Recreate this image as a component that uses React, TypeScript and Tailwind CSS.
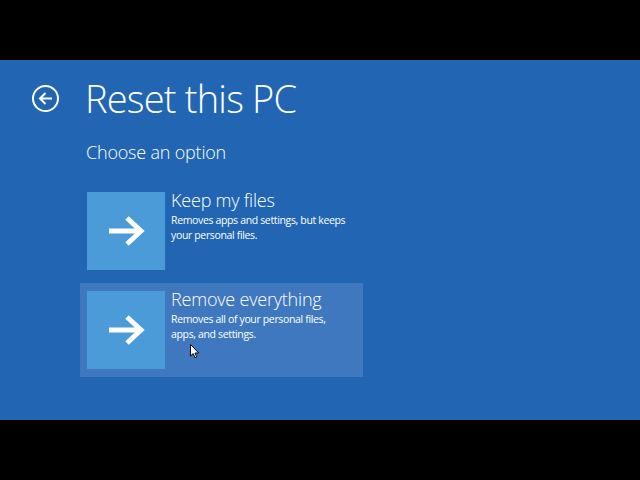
import React from "react";

function ArrowTile() {
  return (
    <div className="flex h-[78px] w-[78px] shrink-0 items-center justify-center bg-[#4b9bd9]">
      <svg width="40" height="32" viewBox="0 0 40 32" fill="none">
        <path d="M3 16H35M21 3L35 16L21 29" stroke="white" strokeWidth="5" strokeLinejoin="miter" />
      </svg>
    </div>
  );
}

type OptionProps = {
  title: string;
  lines: string[];
  active?: boolean;
  children?: React.ReactNode;
};

function Option({ title, lines, active, children }: OptionProps) {
  return (
    <div
      className={`relative flex w-[283px] gap-[6px] px-[7px] py-[8px] ${active ? "bg-[#3f78be]" : ""}`}
    >
      <ArrowTile />
      <div className="-mt-[4px] flex flex-col whitespace-nowrap">
        <div className="text-[18px] font-light leading-[24px] tracking-[-0.2px] text-white">{title}</div>
        <div className="mt-[1px] text-[10.5px] leading-[15px] tracking-[-0.35px] text-white">
          {lines.map((l) => (
            <div key={l}>{l}</div>
          ))}
        </div>
      </div>
      {children}
    </div>
  );
}

function Cursor() {
  return (
    <svg className="absolute left-[110px] top-[61px]" width="10" height="15" viewBox="0 0 10 15">
      <path d="M0.5 0.5V12L3.2 9.6L5 13.8L6.8 13L5 9H8.8Z" fill="white" stroke="black" strokeWidth="1" strokeLinejoin="round" />
    </svg>
  );
}

export default function App() {
  return (
    <div
      className="h-[480px] w-[640px] overflow-hidden bg-black pt-[60px]"
      style={{ fontFamily: '"Open Sans", "Noto Sans", sans-serif' }}
    >
      <div className="h-[360px] w-full bg-[#2266b3]">
        <div className="flex items-center pt-[14px]">
          <div className="ml-[32px] flex h-[27px] w-[27px] items-center justify-center rounded-full border-2 border-white">
            <svg width="15" height="13" viewBox="0 0 15 13" fill="none">
              <path d="M14 6.5H2M7.5 1L2 6.5L7.5 12" stroke="white" strokeWidth="2" />
            </svg>
          </div>
          <h1 className="ml-[26px] text-[38px] font-light leading-[48px] tracking-[-0.8px] text-white">Reset this PC</h1>
        </div>
        <div className="ml-[86px] mt-[18px] text-[18px] font-light leading-[24px] tracking-[-0.2px] text-white">Choose an option</div>
        <div className="ml-[80px] mt-[20px] flex flex-col gap-[5px]">
          <Option title="Keep my files" lines={["Removes apps and settings, but keeps", "your personal files."]} />
          <Option title="Remove everything" lines={["Removes all of your personal files,", "apps, and settings."]} active>
            <Cursor />
          </Option>
        </div>
      </div>
    </div>
  );
}
